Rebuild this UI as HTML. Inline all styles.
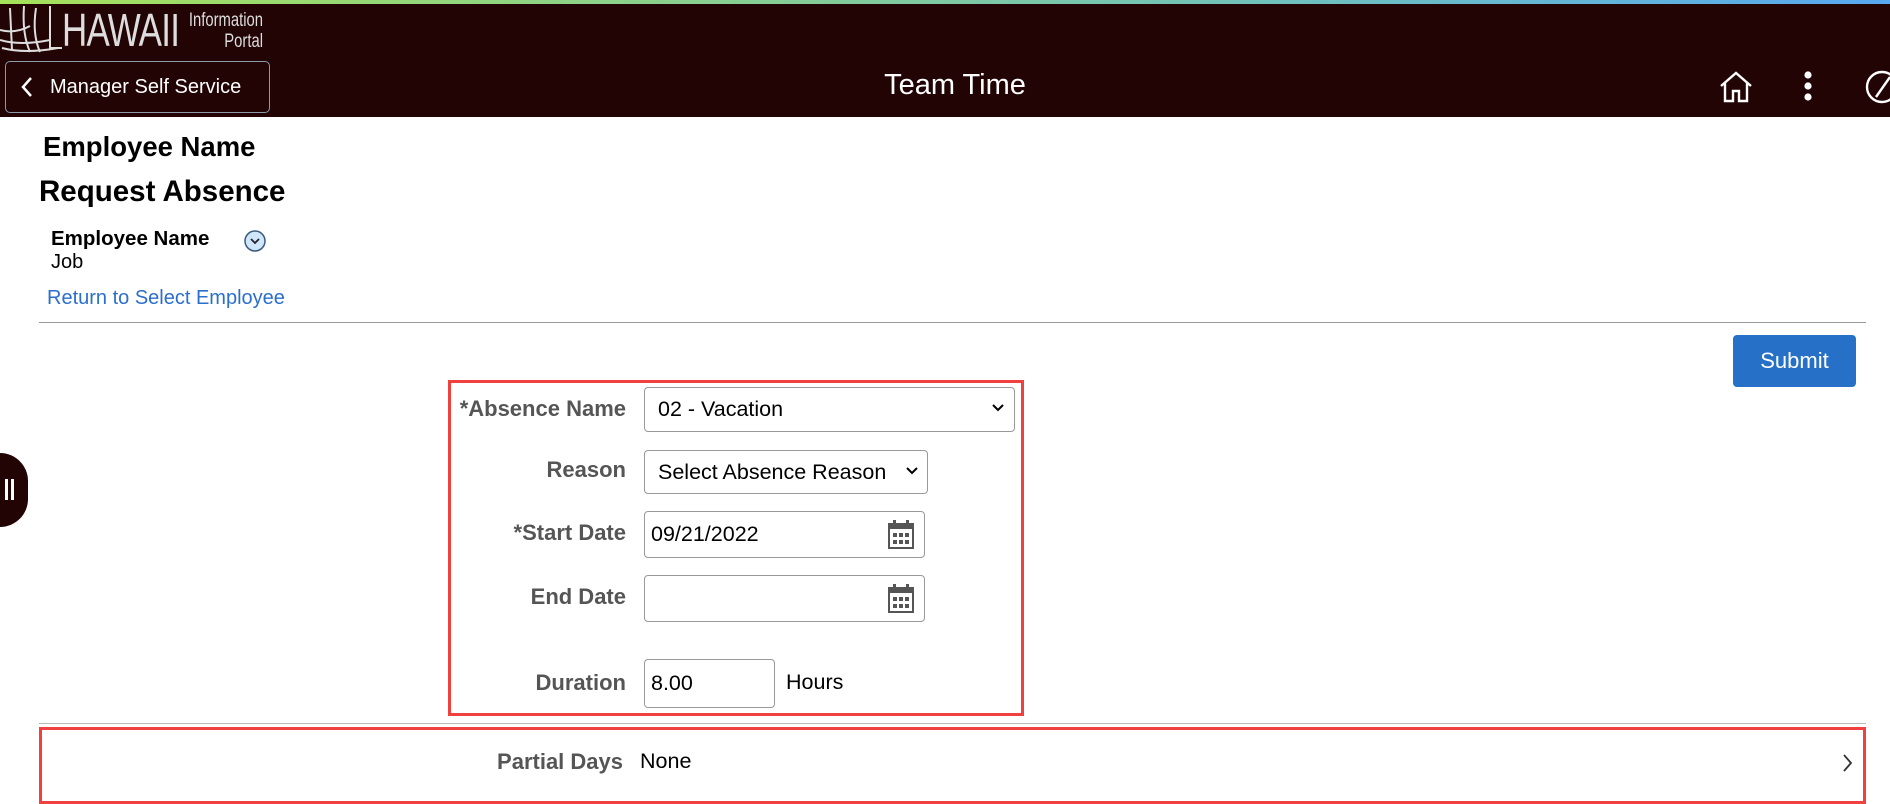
<!DOCTYPE html>
<html><head><style>
*{margin:0;padding:0;box-sizing:border-box}
body{width:1890px;height:804px;overflow:hidden;background:#fff;font-family:"Liberation Sans",Arial,sans-serif;position:relative}
.a{position:absolute}
.lbl{position:absolute;right:1264px;font-size:22px;font-weight:bold;color:#555;white-space:nowrap}
.inp{position:absolute;border:1px solid #999;border-radius:4px;background:#fff;font-size:21.5px;color:#000}
</style></head><body>
<div class="a" style="left:0;top:0;width:1890px;height:4px;background:linear-gradient(90deg,#a6e15a,#6ec0c0 70%,#58a8f2)"></div>
<div class="a" style="left:0;top:4px;width:1890px;height:113px;background:#220405"></div>
<svg class="a" style="left:0;top:4px" width="66" height="52" viewBox="0 0 66 52" fill="none" stroke="#ddd" stroke-width="2"><path d="M2 44 Q25 50 58 44"/><path d="M0 36 Q20 42 50 36"/><path d="M0 26 Q15 30 30 22"/><path d="M10 4 L12 46 M24 2 Q22 30 30 48 M36 4 Q32 30 40 48"/><path d="M50 2 L50 44 L62 44"/></svg>
<div class="a" style="left:62px;top:6px;color:#ddd;font-size:46px;letter-spacing:-1px;transform:scaleX(0.76);transform-origin:left;line-height:48px">HAWAII</div>
<div class="a" style="left:163px;top:10px;color:#ddd;font-size:19px;line-height:21px;text-align:right;width:100px;transform:scaleX(0.78);transform-origin:right">Information<br>Portal</div>
<div class="a" style="left:5px;top:61px;width:265px;height:52px;border:1px solid #8a9aa8;border-radius:5px;color:#fff;font-size:20px;line-height:50px;padding-left:44px">Manager Self Service</div>
<svg class="a" style="left:20px;top:76px" width="14" height="22"><path d="M11 2 L3 11 L11 20" stroke="#fff" stroke-width="2.5" fill="none"/></svg>
<div class="a" style="left:0;width:1910px;top:69px;text-align:center;color:#fff;font-size:29px">Team Time</div>
<svg class="a" style="left:1718px;top:70px" width="36" height="34" viewBox="0 0 36 34" fill="none" stroke="#fff" stroke-width="2.4"><path d="M3 16 L18 3 L33 16 M7 13 V31 H15 V21 H21 V31 H29 V13"/></svg>
<svg class="a" style="left:1800px;top:70px" width="16" height="34"><circle cx="8" cy="5" r="3.6" fill="#fff"/><circle cx="8" cy="16" r="3.6" fill="#fff"/><circle cx="8" cy="27" r="3.6" fill="#fff"/></svg>
<svg class="a" style="left:1862px;top:69px" width="28" height="36"><circle cx="20" cy="18" r="15" stroke="#fff" stroke-width="2.4" fill="none"/><path d="M28 8 L14 28" stroke="#fff" stroke-width="2.4"/></svg>
<div class="a" style="left:43px;top:131px;font-size:27.5px;font-weight:bold">Employee Name</div>
<div class="a" style="left:39px;top:175px;font-size:29.5px;font-weight:bold">Request Absence</div>
<div class="a" style="left:51px;top:227px;font-size:20.5px;font-weight:bold">Employee Name</div>
<svg class="a" style="left:243px;top:229px" width="24" height="24"><circle cx="12" cy="12" r="10" fill="#cfe6fb" stroke="#3a5a80" stroke-width="1.5"/><path d="M8 10 L12 14 L16 10" stroke="#223" stroke-width="1.8" fill="none"/></svg>
<div class="a" style="left:51px;top:251px;font-size:20px">Job</div>
<div class="a" style="left:47px;top:287px;font-size:20px;color:#2b6fcc">Return to Select Employee</div>
<div class="a" style="left:39px;top:322px;width:1827px;height:1px;background:#999"></div>
<div class="a" style="left:1733px;top:335px;width:123px;height:52px;background:#2670c8;border-radius:4px;color:#fff;font-size:22px;text-align:center;line-height:52px">Submit</div>
<div class="a" style="left:0;top:453px;width:28px;height:74px;background:#220405;border-radius:0 37px 37px 0"></div>
<div class="a" style="left:5px;top:479px;width:3px;height:21px;background:#fff"></div><div class="a" style="left:11px;top:479px;width:3px;height:21px;background:#fff"></div>
<div class="a" style="left:448px;top:380px;width:576px;height:336px;border:3px solid #f04040"></div>
<div class="lbl" style="top:396px">*Absence Name</div>
<div class="lbl" style="top:457px">Reason</div>
<div class="lbl" style="top:520px">*Start Date</div>
<div class="lbl" style="top:584px">End Date</div>
<div class="lbl" style="top:670px">Duration</div>
<div class="inp" style="left:644px;top:387px;width:371px;height:45px;line-height:43px;padding-left:13px">02 - Vacation</div>
<svg class="a" style="left:991px;top:403px" width="14" height="10"><path d="M2 2 L7 7 L12 2" stroke="#000" stroke-width="2" fill="none"/></svg>
<div class="inp" style="left:644px;top:450px;width:284px;height:44px;line-height:42px;padding-left:13px">Select Absence Reason</div>
<svg class="a" style="left:905px;top:466px" width="14" height="10"><path d="M2 2 L7 7 L12 2" stroke="#000" stroke-width="2" fill="none"/></svg>
<div class="inp" style="left:644px;top:511px;width:281px;height:47px;line-height:45px;padding-left:6px">09/21/2022</div>
<div class="inp" style="left:644px;top:575px;width:281px;height:47px"></div>
<svg class="a" style="left:887px;top:518px" width="28" height="32"><rect x="2" y="6" width="24" height="24" fill="none" stroke="#555" stroke-width="2"/><rect x="2" y="6" width="24" height="5" fill="#555"/><rect x="6" y="2" width="3" height="6" fill="#555"/><rect x="19" y="2" width="3" height="6" fill="#555"/><g fill="#555"><rect x="6" y="15" width="4" height="4"/><rect x="12" y="15" width="4" height="4"/><rect x="18" y="15" width="4" height="4"/><rect x="6" y="22" width="4" height="4"/><rect x="12" y="22" width="4" height="4"/><rect x="18" y="22" width="4" height="4"/></g></svg>
<svg class="a" style="left:887px;top:582px" width="28" height="32"><rect x="2" y="6" width="24" height="24" fill="none" stroke="#555" stroke-width="2"/><rect x="2" y="6" width="24" height="5" fill="#555"/><rect x="6" y="2" width="3" height="6" fill="#555"/><rect x="19" y="2" width="3" height="6" fill="#555"/><g fill="#555"><rect x="6" y="15" width="4" height="4"/><rect x="12" y="15" width="4" height="4"/><rect x="18" y="15" width="4" height="4"/><rect x="6" y="22" width="4" height="4"/><rect x="12" y="22" width="4" height="4"/><rect x="18" y="22" width="4" height="4"/></g></svg>
<div class="inp" style="left:644px;top:659px;width:131px;height:49px;line-height:47px;padding-left:6px">8.00</div>
<div class="a" style="left:786px;top:670px;font-size:21.5px">Hours</div>
<div class="a" style="left:39px;top:723px;width:1827px;height:1px;background:#bbb"></div>
<div class="a" style="left:39px;top:727px;width:1827px;height:77px;border:3px solid #f04040"></div>
<div class="lbl" style="top:749px;right:1267px">Partial Days</div>
<div class="a" style="left:640px;top:749px;font-size:21.5px">None</div>
<svg class="a" style="left:1842px;top:753px" width="12" height="20"><path d="M2 2 L9 10 L2 18" stroke="#333" stroke-width="1.8" fill="none"/></svg>
</body></html>
